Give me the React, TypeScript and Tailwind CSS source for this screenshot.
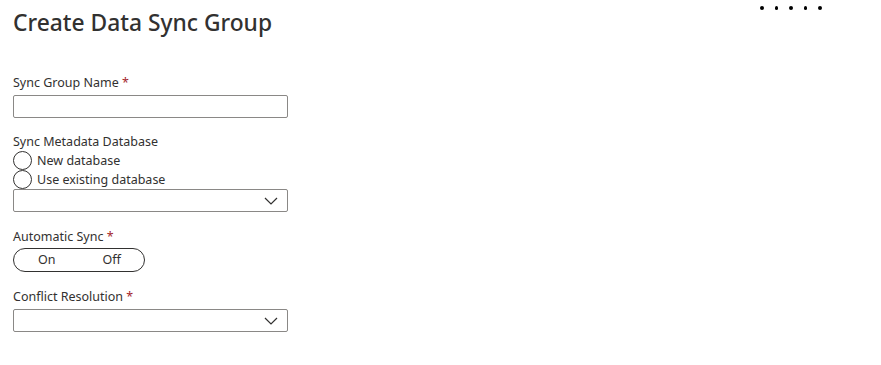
import React from "react";

function Label({ text, required }: { text: string; required?: boolean }) {
  return (
    <div className="text-[12.5px] leading-[18px] text-[#323130]">
      {text}
      {required && <span className="text-[#a4262c]"> *</span>}
    </div>
  );
}

function Chevron() {
  return (
    <svg width="14" height="8" viewBox="0 0 14 8" fill="none">
      <path d="M1 1l6 6 6-6" stroke="#323130" strokeWidth="1.2" />
    </svg>
  );
}

function Dropdown() {
  return (
    <div className="w-[275px] h-[23px] border border-[#8a8886] rounded-[2px] flex items-center justify-end pr-[9px]">
      <Chevron />
    </div>
  );
}

function Radio({ text }: { text: string }) {
  return (
    <div className="flex items-center h-[19px] gap-[5px]">
      <div className="w-[19px] h-[19px] rounded-full border border-[#323130] box-border" />
      <span className="text-[12.5px] text-[#323130] leading-[18px]">{text}</span>
    </div>
  );
}

export default function App() {
  return (
    <div
      className="relative w-[881px] h-[365px] bg-white"
      style={{ fontFamily: '"Noto Sans", "Open Sans", sans-serif' }}
    >
      <div className="absolute left-[760px] top-[6px] flex gap-[11px]">
        {[0, 1, 2, 3, 4].map((i) => (
          <div key={i} className="w-[3.5px] h-[3.5px] rounded-full bg-black" />
        ))}
      </div>
      <div className="pl-[13px] pt-[7px] flex flex-col">
        <h1 className="text-[22.8px] leading-[32px] font-medium text-[#323130]">
          Create Data Sync Group
        </h1>
        <div className="mt-[35px]">
          <Label text="Sync Group Name" required />
        </div>
        <div className="mt-[3px] w-[275px] h-[23px] border border-[#8a8886] rounded-[2px]" />
        <div className="mt-[15px]">
          <Label text="Sync Metadata Database" />
        </div>
        <div className="flex flex-col">
          <Radio text="New database" />
          <Radio text="Use existing database" />
        </div>
        <div>
          <Dropdown />
        </div>
        <div className="mt-[16px]">
          <Label text="Automatic Sync" required />
        </div>
        <div className="mt-[2px] w-[132px] h-[24px] border border-[#323130] rounded-full flex items-center text-[12.5px] text-[#323130]">
          <span className="ml-[24px]">On</span>
          <span className="ml-[47px]">Off</span>
        </div>
        <div className="mt-[16px]">
          <Label text="Conflict Resolution" required />
        </div>
        <div className="mt-[3px]">
          <Dropdown />
        </div>
      </div>
    </div>
  );
}
